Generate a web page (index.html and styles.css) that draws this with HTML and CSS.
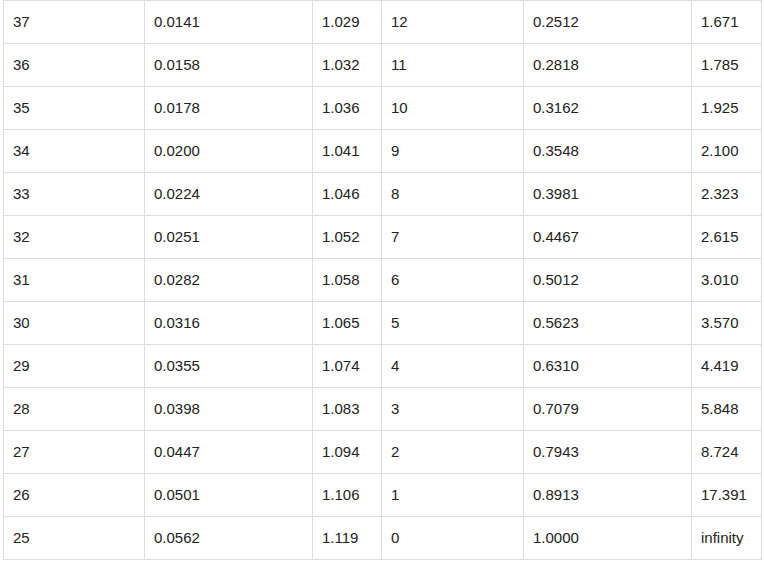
FILE: index.html
```html
<!DOCTYPE html>
<html>
<head>
<meta charset="utf-8">
<link rel="stylesheet" href="styles.css">
</head>
<body>
<table class="grid">
<colgroup>
<col class="c1"><col class="c2"><col class="c3"><col class="c4"><col class="c5"><col class="c6">
</colgroup>
<tbody>
<tr><td>37</td><td>0.0141</td><td>1.029</td><td>12</td><td>0.2512</td><td>1.671</td></tr>
<tr><td>36</td><td>0.0158</td><td>1.032</td><td>11</td><td>0.2818</td><td>1.785</td></tr>
<tr><td>35</td><td>0.0178</td><td>1.036</td><td>10</td><td>0.3162</td><td>1.925</td></tr>
<tr><td>34</td><td>0.0200</td><td>1.041</td><td>9</td><td>0.3548</td><td>2.100</td></tr>
<tr><td>33</td><td>0.0224</td><td>1.046</td><td>8</td><td>0.3981</td><td>2.323</td></tr>
<tr><td>32</td><td>0.0251</td><td>1.052</td><td>7</td><td>0.4467</td><td>2.615</td></tr>
<tr><td>31</td><td>0.0282</td><td>1.058</td><td>6</td><td>0.5012</td><td>3.010</td></tr>
<tr><td>30</td><td>0.0316</td><td>1.065</td><td>5</td><td>0.5623</td><td>3.570</td></tr>
<tr><td>29</td><td>0.0355</td><td>1.074</td><td>4</td><td>0.6310</td><td>4.419</td></tr>
<tr><td>28</td><td>0.0398</td><td>1.083</td><td>3</td><td>0.7079</td><td>5.848</td></tr>
<tr><td>27</td><td>0.0447</td><td>1.094</td><td>2</td><td>0.7943</td><td>8.724</td></tr>
<tr><td>26</td><td>0.0501</td><td>1.106</td><td>1</td><td>0.8913</td><td>17.391</td></tr>
<tr><td>25</td><td>0.0562</td><td>1.119</td><td>0</td><td>1.0000</td><td>infinity</td></tr>
</tbody>
</table>
</body>
</html>
```
FILE: styles.css
```css
html, body {
  margin: 0;
  padding: 0;
  background: #fff;
}
.grid {
  margin-left: 3px;
  border-collapse: collapse;
  table-layout: fixed;
  width: 759px;
  font-family: "Liberation Sans", Arial, sans-serif;
  font-size: 15px;
  color: #222;
}
.c1 { width: 141px; }
.c2 { width: 168px; }
.c3 { width: 69px; }
.c4 { width: 142px; }
.c5 { width: 168px; }
.c6 { width: 70px; }
.grid td {
  border: 1px solid #ddd;
  height: 43px;
  padding: 0 0 2px 9px;
  vertical-align: middle;
  text-align: left;
  box-sizing: border-box;
}
```
